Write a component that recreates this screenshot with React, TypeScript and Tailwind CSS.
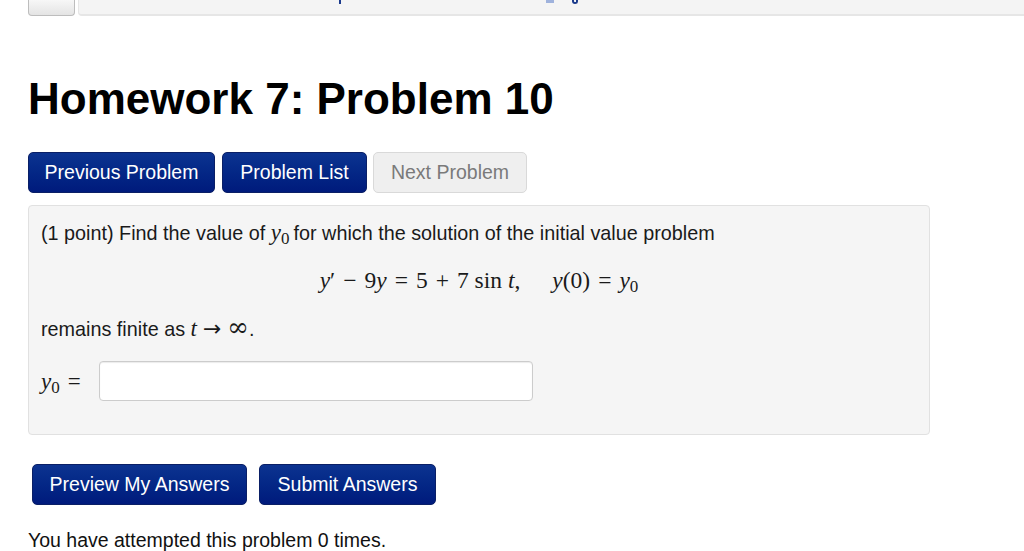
import React from 'react'

// WeBWorK-style problem page

function Btn({ children, disabled, className = '' }: { children: React.ReactNode; disabled?: boolean; className?: string }) {
  if (disabled) {
    return (
      <button className={`h-[41px] rounded-[5px] border border-[#d9d9d9] bg-[#efefef] text-[#7a7a7a] text-[19.5px] ${className}`}>
        {children}
      </button>
    )
  }
  return (
    <button
      className={`h-[41px] rounded-[5px] border border-[#0a1f66] bg-gradient-to-b from-[#0c3390] to-[#001a7c] text-white text-[19.5px] ${className}`}
    >
      {children}
    </button>
  )
}

function Sub({ children }: { children: React.ReactNode }) {
  return <span className="relative top-[4px] text-[17px] leading-none">{children}</span>
}

function Y0() {
  return (
    <span className="font-['Liberation_Serif',serif] text-[23px] leading-none">
      <i>y</i>
      <Sub>0</Sub>
    </span>
  )
}

function Op({ children }: { children: React.ReactNode }) {
  return <span className="mx-[8px]">{children}</span>
}

export default function App() {
  return (
    <div className="min-h-screen bg-white text-[#111] font-['Liberation_Sans',Arial,sans-serif]">
      {/* cut-off nav bar */}
      <div className="flex h-[17px] overflow-hidden">
        <div className="ml-[28px] w-[47px] h-[16px] rounded-b-[4px] border border-t-0 border-[#bdbdbd] bg-gradient-to-b from-[#f7f7f7] to-[#e4e4e4]" />
        <div className="ml-[3px] flex-1 h-[16px] rounded-bl-[4px] bg-[#f4f4f4] border-b-2 border-l border-[#e6e6e6] flex items-start">
          <div className="ml-[260px] w-[2px] h-[4px] bg-[#1b3a8c]" />
          <div className="ml-[205px] w-[8px] h-[3px] bg-[#9fb2dc]" />
          <div className="ml-[18px] w-[6px] h-[4px] rounded-b-full border-2 border-t-0 border-[#1b3a8c]" />
        </div>
      </div>

      <div className="pl-[28px]">
        <h1 className="mt-[59px] text-[44px] leading-[46px] font-bold text-black">Homework 7: Problem 10</h1>

        <div className="mt-[30px] flex">
          <Btn className="w-[187px]">Previous Problem</Btn>
          <Btn className="ml-[7px] w-[145px]">Problem List</Btn>
          <Btn disabled className="ml-[6px] w-[154px]">Next Problem</Btn>
        </div>

        {/* problem body */}
        <div className="mt-[12px] w-[902px] rounded-[4px] border border-[#e1e1e1] bg-[#f5f5f5] pl-[12px] pt-[14px] pb-[33px] text-[19.8px] text-[#1a1a1a]">
          <p className="h-[26px] leading-[26px]">
            (1 point) Find the value of <Y0 />
            <span className="ml-[4px]">for which the solution of the initial value problem</span>
          </p>
          <div className="mt-[21px] h-[26px] leading-[26px] text-center pr-[12px] font-['Liberation_Serif',serif] text-[23.5px]">
            <span className="leading-none">
              <i>y</i>′<Op>−</Op>9<i>y</i>
              <Op>=</Op>5<Op>+</Op>7 sin <i>t</i>,<span className="inline-block w-[32px]" />
              <i>y</i>(0)<Op>=</Op>
              <i>y</i>
              <Sub>0</Sub>
            </span>
          </div>
          <p className="mt-[21px] h-[26px] leading-[26px]">
            remains finite as{' '}
            <span className="leading-none">
              <i className="font-['Liberation_Serif',serif] text-[23px]">t</i>
              <span className="mx-[6px] font-['DejaVu_Sans',sans-serif] text-[22px]">→</span>
              <span className="font-['DejaVu_Serif',serif] text-[26px]">∞</span>
            </span>
            .
          </p>
          <div className="mt-[21px] flex items-center h-[40px]">
            <span className="w-[58px] leading-none">
              <Y0 />
              <span className="font-['Liberation_Serif',serif] text-[23px] ml-[8px]">=</span>
            </span>
            <input className="h-[40px] w-[434px] rounded-[4px] border border-[#cccccc] bg-white shadow-[inset_0_1px_1px_rgba(0,0,0,0.08)]" />
          </div>
        </div>

        <div className="mt-[29px] ml-[4px] flex gap-[12px]">
          <Btn className="w-[215px]">Preview My Answers</Btn>
          <Btn className="w-[177px]">Submit Answers</Btn>
        </div>

        <p className="mt-[22px] leading-[26px] text-[19.5px] text-[#111]">You have attempted this problem 0 times.</p>
      </div>
    </div>
  )
}
